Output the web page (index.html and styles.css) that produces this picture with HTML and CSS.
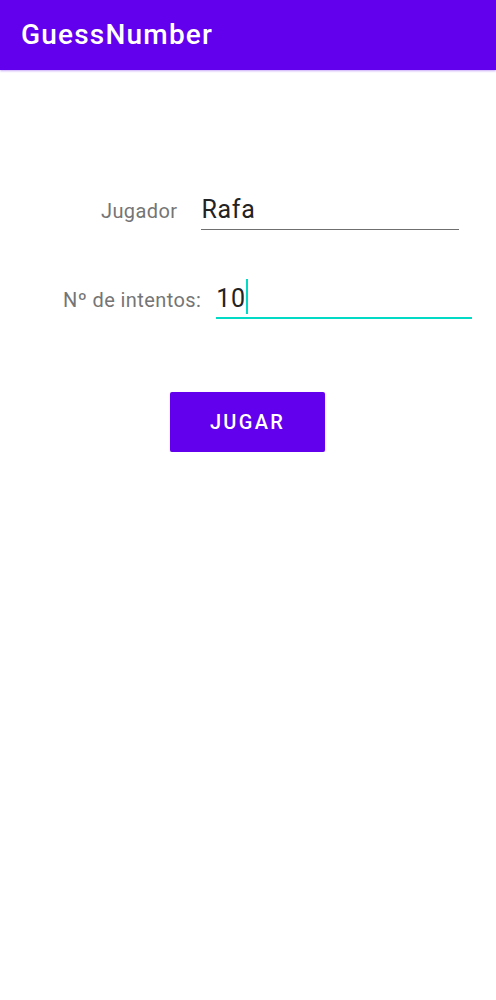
FILE: index.html
```html
<!DOCTYPE html>
<html lang="es">
<head>
    <meta charset="UTF-8">
    <meta name="viewport" content="width=device-width, initial-scale=1.0">
    <title>GuessNumber</title>
    <link rel="stylesheet" href="styles.css">
</head>
<body>
    <header class="app-bar">
        <h1 class="app-title">GuessNumber</h1>
    </header>

    <main class="content">
        <div class="form-row row-player">
            <label class="field-label">Jugador</label>
            <div class="field-input field-player">Rafa</div>
        </div>

        <div class="form-row row-tries">
            <label class="field-label">Nº de intentos:</label>
            <div class="field-input field-tries focused">10<span class="caret"></span></div>
        </div>

        <div class="button-row">
            <button class="play-button">JUGAR</button>
        </div>
    </main>
</body>
</html>
```

FILE: styles.css
```css
:root {
    --primary-color: #6200ee;
    --accent-color: #03dac5;
    --text-color: #232323;
    --label-color: #757575;
    --line-color: #6f6f6f;
}

body {
    font-family: Roboto, "Noto Sans", sans-serif;
    background-color: #ffffff;
    color: var(--text-color);
    margin: 0;
}

.app-bar {
    height: 70px;
    background-color: var(--primary-color);
    box-shadow: 0 1px 2px rgba(98, 0, 238, 0.35);
    display: flex;
    align-items: center;
    padding-left: 21px;
}

.app-title {
    margin: 0;
    color: #ffffff;
    font-size: 28px;
    font-weight: 500;
    letter-spacing: 1.2px;
    line-height: 32px;
    padding-bottom: 1px;
}

.content {
    padding-top: 126px;
}

.form-row {
    display: flex;
    align-items: baseline;
}

.row-player {
    padding-left: 101px;
    gap: 24px;
}

.row-tries {
    margin-top: 55px;
    padding-left: 63px;
    gap: 15px;
}

.field-label {
    font-size: 20px;
    letter-spacing: 0.4px;
    color: var(--label-color);
}

.field-input {
    font-size: 25px;
    letter-spacing: 0.7px;
    line-height: 28px;
    color: var(--text-color);
    padding-bottom: 5px;
    border-bottom: 1px solid var(--line-color);
}

.field-player {
    width: 258px;
}

.field-tries {
    width: 256px;
    padding-bottom: 4px;
}

.field-input.focused {
    border-bottom: 2px solid var(--accent-color);
}

.caret {
    display: inline-block;
    width: 2px;
    height: 35px;
    margin: -6px 0 -1px 0;
    vertical-align: -6px;
    background-color: var(--accent-color);
}

.button-row {
    display: flex;
    justify-content: center;
    margin-top: 73px;
}

.play-button {
    width: 155px;
    height: 60px;
    margin-left: -1px;
    border: none;
    border-radius: 2px;
    background-color: var(--primary-color);
    color: #ffffff;
    font-family: Roboto, "Noto Sans", sans-serif;
    font-size: 20px;
    font-weight: 500;
    letter-spacing: 2.3px;
    box-shadow: 0 1px 2px rgba(0, 0, 0, 0.2);
}
```
